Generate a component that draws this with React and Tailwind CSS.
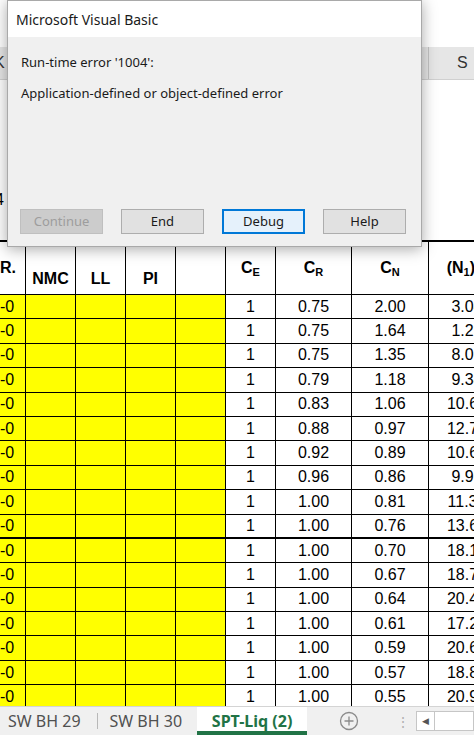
import React from 'react'

const rows = [
  ['1', '0.75', '2.00', '3.04'],
  ['1', '0.75', '1.64', '1.23'],
  ['1', '0.75', '1.35', '8.07'],
  ['1', '0.79', '1.18', '9.34'],
  ['1', '0.83', '1.06', '10.65'],
  ['1', '0.88', '0.97', '12.71'],
  ['1', '0.92', '0.89', '10.62'],
  ['1', '0.96', '0.86', '9.93'],
  ['1', '1.00', '0.81', '11.37'],
  ['1', '1.00', '0.76', '13.66'],
  ['1', '1.00', '0.70', '18.15'],
  ['1', '1.00', '0.67', '18.74'],
  ['1', '1.00', '0.64', '20.42'],
  ['1', '1.00', '0.61', '17.23'],
  ['1', '1.00', '0.59', '20.61'],
  ['1', '1.00', '0.57', '18.84'],
  ['1', '1.00', '0.55', '20.93'],
]

function Sub({ main, sub }) {
  return (
    <span>
      {main}
      <span className="text-[11px] relative top-[3px]">{sub}</span>
    </span>
  )
}

function HeaderRow() {
  return (
    <div className="flex h-[53px] font-bold">
      <div className="w-[26px] shrink-0 border-r border-b border-black flex items-center text-[16px]">R.</div>
      <div className="w-[50px] shrink-0 border-r border-b border-black flex items-end justify-center pb-[3px]">NMC</div>
      <div className="w-[50px] shrink-0 border-r border-b border-black flex items-end justify-center pb-[3px]">LL</div>
      <div className="w-[50px] shrink-0 border-r border-b border-black flex items-end justify-center pb-[3px]">PI</div>
      <div className="w-[50px] shrink-0 border-r border-b border-black" />
      <div className="w-[50px] shrink-0 border-r border-b border-black flex items-center justify-center"><Sub main="C" sub="E" /></div>
      <div className="w-[76px] shrink-0 border-r border-b border-black flex items-center justify-center"><Sub main="C" sub="R" /></div>
      <div className="w-[77px] shrink-0 border-r border-b border-black flex items-center justify-center"><Sub main="C" sub="N" /></div>
      <div className="w-[77px] shrink-0 border-r border-b border-black flex items-center justify-center"><span>(<Sub main="N" sub="1" />)<sub className="text-[11px]">60</sub></span></div>
    </div>
  )
}

function DataRow({ r, thick }) {
  const b = thick ? 'border-b-2' : 'border-b'
  return (
    <div className="flex h-[24.4px]">
      <div className={`w-[26px] shrink-0 border-r ${b} border-black bg-[#ffff00] flex items-center leading-none`}>-0</div>
      {[0, 1, 2, 3].map(i => (
        <div key={i} className={`w-[50px] shrink-0 border-r ${b} border-black bg-[#ffff00]`} />
      ))}
      <div className={`w-[50px] shrink-0 border-r ${b} border-black flex items-center justify-center`}>{r[0]}</div>
      <div className={`w-[76px] shrink-0 border-r ${b} border-black flex items-center justify-center`}>{r[1]}</div>
      <div className={`w-[77px] shrink-0 border-r ${b} border-black flex items-center justify-center`}>{r[2]}</div>
      <div className={`w-[77px] shrink-0 border-r ${b} border-black flex items-center justify-center`}>{r[3]}</div>
    </div>
  )
}

function Button({ label, kind }) {
  const styles = {
    disabled: 'bg-[#cccccc] border-[#bfbfbf] text-[#9d9d9d]',
    normal: 'bg-[#e1e1e1] border-[#adadad] text-[#1a1a1a]',
    focus: 'bg-[#e5f1fb] border-[#0078d7] border-2 text-[#1a1a1a]',
  }
  return (
    <div className={`w-[83px] h-[25px] border flex items-center justify-center text-[13px] ${styles[kind]}`}>
      {label}
    </div>
  )
}

export default function App() {
  return (
    <div className="relative w-[474px] h-[735px] overflow-hidden bg-white text-black font-['Liberation_Sans',Arial,sans-serif] text-[16px]">

      {/* Sheet area behind the dialog */}
      <div className="h-[242px] border-b-2 border-black flex flex-col">
        <div className="h-[47px]" />
        <div className="h-[33px] bg-[#e6e6e6] border-b border-[#d0d0d0] flex items-end">
          <span className="-ml-[6px] pb-[4px] text-[#333]">K</span>
          <div className="ml-auto w-[46px] h-full border-l border-[#c4c4c4] flex items-end pl-[28px] pb-[4px] text-[#333]">S</div>
        </div>
        <div className="flex-1 flex items-end pb-[28px]">
          <span className="-ml-[5px]">4</span>
        </div>
      </div>

      {/* Grid */}
      <div className="w-[560px]">
        <HeaderRow />
        {rows.map((r, i) => (
          <DataRow key={i} r={r} thick={i === 9} />
        ))}
      </div>

      {/* Sheet tabs */}
      <div className="absolute left-0 right-0 bottom-0 h-[29px] bg-[#f0f0f0] border-t border-[#d4d4d4] flex items-stretch font-['Noto_Sans',sans-serif] text-[16px] text-[#505050]">
        <div className="pl-[8px] pr-[16px] flex items-center">SW BH 29</div>
        <div className="w-px bg-[#b8b8b8] my-[6px]" />
        <div className="pl-[12px] pr-[15px] flex items-center">SW BH 30</div>
        <div className="w-[110px] bg-white border-b-[4px] border-[#217346] flex items-center justify-center pt-[3px] font-bold text-[#217346]">SPT-Liq (2)</div>
        <div className="w-[84px] flex items-center justify-center">
          <svg width="20" height="20" viewBox="0 0 20 20">
            <circle cx="10" cy="10" r="8.5" fill="none" stroke="#8a8a8a" strokeWidth="1.3" />
            <path d="M10 5.5v9M5.5 10h9" stroke="#8a8a8a" strokeWidth="1.3" />
          </svg>
        </div>
        <div className="w-[24px] flex items-center justify-center text-[#b0b0b0] text-[14px]">⋮</div>
        <div className="flex-1 my-[4px] ml-[1px] bg-white border border-[#c6c6c6] flex items-stretch">
          <div className="w-[18px] border-r border-[#c6c6c6] flex items-center justify-center text-[9px] text-[#555]">◀</div>
        </div>
      </div>

      {/* VBA error dialog */}
      <div className="absolute left-[7px] top-0 w-[415px] h-[247px] bg-[#f0f0f0] border border-[#a9a9a9] shadow-[0_2px_14px_rgba(0,0,0,0.35)] flex flex-col font-['Noto_Sans',sans-serif]">
        <div className="h-[36px] bg-white flex items-center pl-[8px] text-[14px] text-[#1a1a1a]">
          Microsoft Visual Basic
        </div>
        <div className="pl-[13px] pt-[16px] text-[13px] text-[#1a1a1a] flex flex-col gap-[13px] leading-[18px]">
          <div>Run-time error '1004':</div>
          <div>Application-defined or object-defined error</div>
        </div>
        <div className="mt-auto mb-[12px] pl-[12px] flex gap-[18px]">
          <Button label="Continue" kind="disabled" />
          <Button label="End" kind="normal" />
          <Button label="Debug" kind="focus" />
          <Button label="Help" kind="normal" />
        </div>
      </div>
    </div>
  )
}
